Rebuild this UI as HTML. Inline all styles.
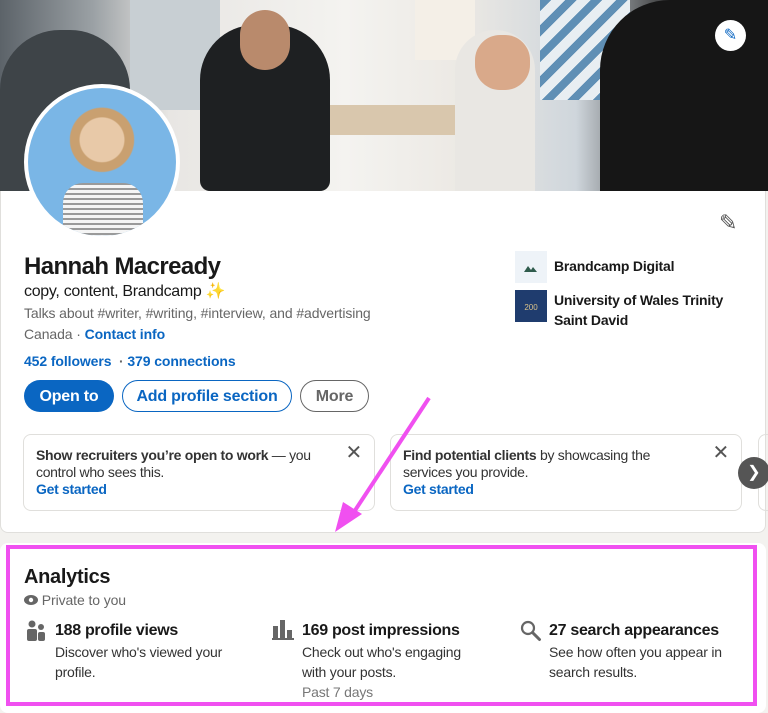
<!DOCTYPE html>
<html><head><meta charset="utf-8"><style>
*{box-sizing:border-box;margin:0;padding:0}
body{width:768px;height:713px;background:#f3f2ef;font-family:"Liberation Sans",sans-serif;position:relative;overflow:hidden;color:#191919}
.abs{position:absolute}
.card{position:absolute;left:0;top:0;width:766px;height:533px;background:#fff;border-radius:0 0 8px 8px;border:1px solid #e0dfdc;border-top:none}
.banner{position:absolute;left:0;top:0;width:768px;height:191px;overflow:hidden;background:linear-gradient(90deg,#5c6369 0%,#9aa0a4 12%,#e8e6e3 22%,#f4f3f0 45%,#ece9e4 60%,#cfd6dc 75%,#2b2b2b 88%,#1a1a1a 100%)}
.b{font-size:14px;line-height:18px;letter-spacing:-0.1px}
.blue{color:#0a66c2}
.btn{position:absolute;top:380px;height:32px;border-radius:16px;font-size:16px;font-weight:bold;display:flex;align-items:center;justify-content:center;letter-spacing:-0.2px;padding-top:2px}
.sug{position:absolute;top:434px;width:352px;height:77px;border:1px solid #e0dfdc;border-radius:8px;padding:12px 50px 12px 12px;font-size:14px;line-height:17px;color:#333;letter-spacing:-0.3px}
.x{position:absolute;right:12px;top:10px;font-size:20px;color:#555}
.an{position:absolute;left:0;top:543px;width:766px;height:170px;background:#fff;border-radius:8px}
.mag{position:absolute;left:6px;top:545px;width:751px;height:161px;border:4px solid #f050f0}
.st{position:absolute;top:621px;font-size:14px;line-height:20px;letter-spacing:-0.2px;color:#333}
.st b{font-size:16px;display:block;margin-bottom:1px;color:#191919;letter-spacing:-0.3px}
</style></head><body>
<div class="card"></div>
<div class="banner">
  <div class="abs" style="left:0;top:30px;width:130px;height:161px;background:#3e4448;border-radius:60px 60px 0 0"></div>
  <div class="abs" style="left:130px;top:0;width:90px;height:110px;background:#c8cfd3"></div>
  <div class="abs" style="left:200px;top:25px;width:130px;height:166px;background:#1e2022;border-radius:55px 55px 10px 10px"></div>
  <div class="abs" style="left:240px;top:10px;width:50px;height:60px;background:#b98a6c;border-radius:25px"></div>
  <div class="abs" style="left:330px;top:105px;width:150px;height:30px;background:#d9c7ad"></div>
  <div class="abs" style="left:415px;top:0;width:60px;height:60px;background:#f4efe7"></div>
  <div class="abs" style="left:455px;top:30px;width:80px;height:161px;background:#e9e7e3;border-radius:40px 40px 0 0"></div>
  <div class="abs" style="left:475px;top:35px;width:55px;height:55px;background:#d9a98a;border-radius:25px"></div>
  <div class="abs" style="left:540px;top:0;width:90px;height:100px;background:repeating-linear-gradient(135deg,#5f8fb5 0 8px,#e8eef2 8px 18px)"></div>
  <div class="abs" style="left:600px;top:0;width:168px;height:191px;background:#161616;border-radius:70px 0 0 0"></div>
  <div class="abs" style="left:715px;top:20px;width:31px;height:31px;background:#fff;border-radius:50%;color:#0a66c2;font-size:16px;text-align:center;line-height:31px">✎</div>
</div>
<div class="abs" style="left:24px;top:84px;width:156px;height:156px;border-radius:50%;background:#fff;padding:4px"><div style="width:100%;height:100%;border-radius:50%;background:radial-gradient(circle at 50% 35%,#e8c9a8 0 18%,#c9a070 19% 26%,#7ab6e6 27%);overflow:hidden;position:relative"><div style="position:absolute;left:35px;top:95px;width:80px;height:60px;background:repeating-linear-gradient(0deg,#f5f5f5 0 3px,#9a9a9a 3px 5px);border-radius:20px 20px 0 0"></div></div></div>
<div class="abs" style="left:719px;top:210px;font-size:22px;color:#555">✎</div>
<div class="abs" style="left:24px;top:253px;font-size:24px;font-weight:bold;letter-spacing:-0.6px">Hannah Macready</div>
<div class="abs" style="left:24px;top:281px;font-size:16px;letter-spacing:-0.3px">copy, content, Brandcamp <span style="color:#e8c9a0">✨</span></div>
<div class="abs b" style="left:24px;top:304px;color:#666">Talks about #writer, #writing, #interview, and #advertising</div>
<div class="abs b" style="left:24px;top:325px;color:#666">Canada · <b class="blue">Contact info</b></div>
<div class="abs b blue" style="left:24px;top:352px;font-weight:bold">452 followers <span style="color:#666">&nbsp;·</span> 379 connections</div>
<div class="btn" style="left:24px;width:90px;background:#0a66c2;color:#fff">Open to</div>
<div class="btn" style="left:122px;width:170px;border:1px solid #0a66c2;color:#0a66c2">Add profile section</div>
<div class="btn" style="left:300px;width:69px;border:1px solid #666;color:#666">More</div>
<div class="abs" style="left:515px;top:251px;width:32px;height:32px;background:#eef3f8"><svg width="32" height="32"><path d="M9 21l4-6 3 4 2-3 4 5z" fill="#2f5b4c"/></svg></div>
<div class="abs" style="left:554px;top:258px;font-size:14px;font-weight:bold;letter-spacing:-0.2px">Brandcamp Digital</div>
<div class="abs" style="left:515px;top:290px;width:32px;height:32px;background:#1f3c6e;color:#d9c28a;font-size:8px;text-align:center;padding-top:13px">200</div>
<div class="abs" style="left:554px;top:290px;font-size:14px;font-weight:bold;line-height:20px;letter-spacing:-0.2px">University of Wales Trinity<br>Saint David</div>
<div class="sug" style="left:23px"><b>Show recruiters you’re open to work</b> — you control who sees this.<br><b class="blue">Get started</b><span class="x">✕</span></div>
<div class="sug" style="left:390px"><b>Find potential clients</b> by showcasing the services you provide.<br><b class="blue">Get started</b><span class="x">✕</span></div>
<div class="abs" style="left:758px;top:434px;width:10px;height:77px;border:1px solid #e0dfdc;border-right:none;border-radius:8px 0 0 8px"></div>
<div class="abs" style="left:738px;top:457px;width:32px;height:32px;border-radius:50%;background:#555;color:#fff;font-size:16px;line-height:32px;text-align:center">❯</div>
<div class="an"></div>
<div class="mag"></div>
<div class="abs" style="left:24px;top:566px;font-size:20px;font-weight:bold;letter-spacing:-0.3px">Analytics</div>
<div class="abs b" style="left:24px;top:591px;color:#666"><svg width="14" height="12" style="vertical-align:-1px"><ellipse cx="7" cy="6" rx="7" ry="5" fill="#666"/><circle cx="7" cy="6" r="2.2" fill="#fff"/></svg> Private to you</div>
<svg class="abs" style="left:26px;top:620px" width="20" height="22"><circle cx="6" cy="4" r="3.5" fill="#666"/><rect x="1" y="9" width="10" height="12" rx="2" fill="#666"/><circle cx="15" cy="7" r="3" fill="#666"/><rect x="12" y="12" width="7" height="9" rx="2" fill="#666"/></svg>
<div class="st" style="left:55px;width:190px"><b>188 profile views</b>Discover who's viewed your profile.</div>
<svg class="abs" style="left:272px;top:620px" width="22" height="20"><rect x="1" y="6" width="5" height="12" fill="#666"/><rect x="8" y="0" width="5" height="18" fill="#666"/><rect x="15" y="10" width="5" height="8" fill="#666"/><rect x="0" y="18" width="22" height="2" fill="#666"/></svg>
<div class="st" style="left:302px;width:175px"><b style="white-space:nowrap">169 post impressions</b>Check out who's engaging with your posts.<br><span style="color:#777;font-size:14px">Past 7 days</span></div>
<svg class="abs" style="left:520px;top:620px" width="22" height="22"><circle cx="8" cy="8" r="6" fill="none" stroke="#666" stroke-width="2.2"/><path d="M12.5 12.5l7 7" stroke="#666" stroke-width="3" stroke-linecap="round"/></svg>
<div class="st" style="left:549px;width:200px"><b>27 search appearances</b>See how often you appear in search results.</div>
<svg class="abs" style="left:0;top:0" width="768" height="713"><path d="M429 398L352 515" stroke="#f050f0" stroke-width="4"/><path d="M335 532L343 502L362 514z" fill="#f050f0"/></svg>
</body></html>
